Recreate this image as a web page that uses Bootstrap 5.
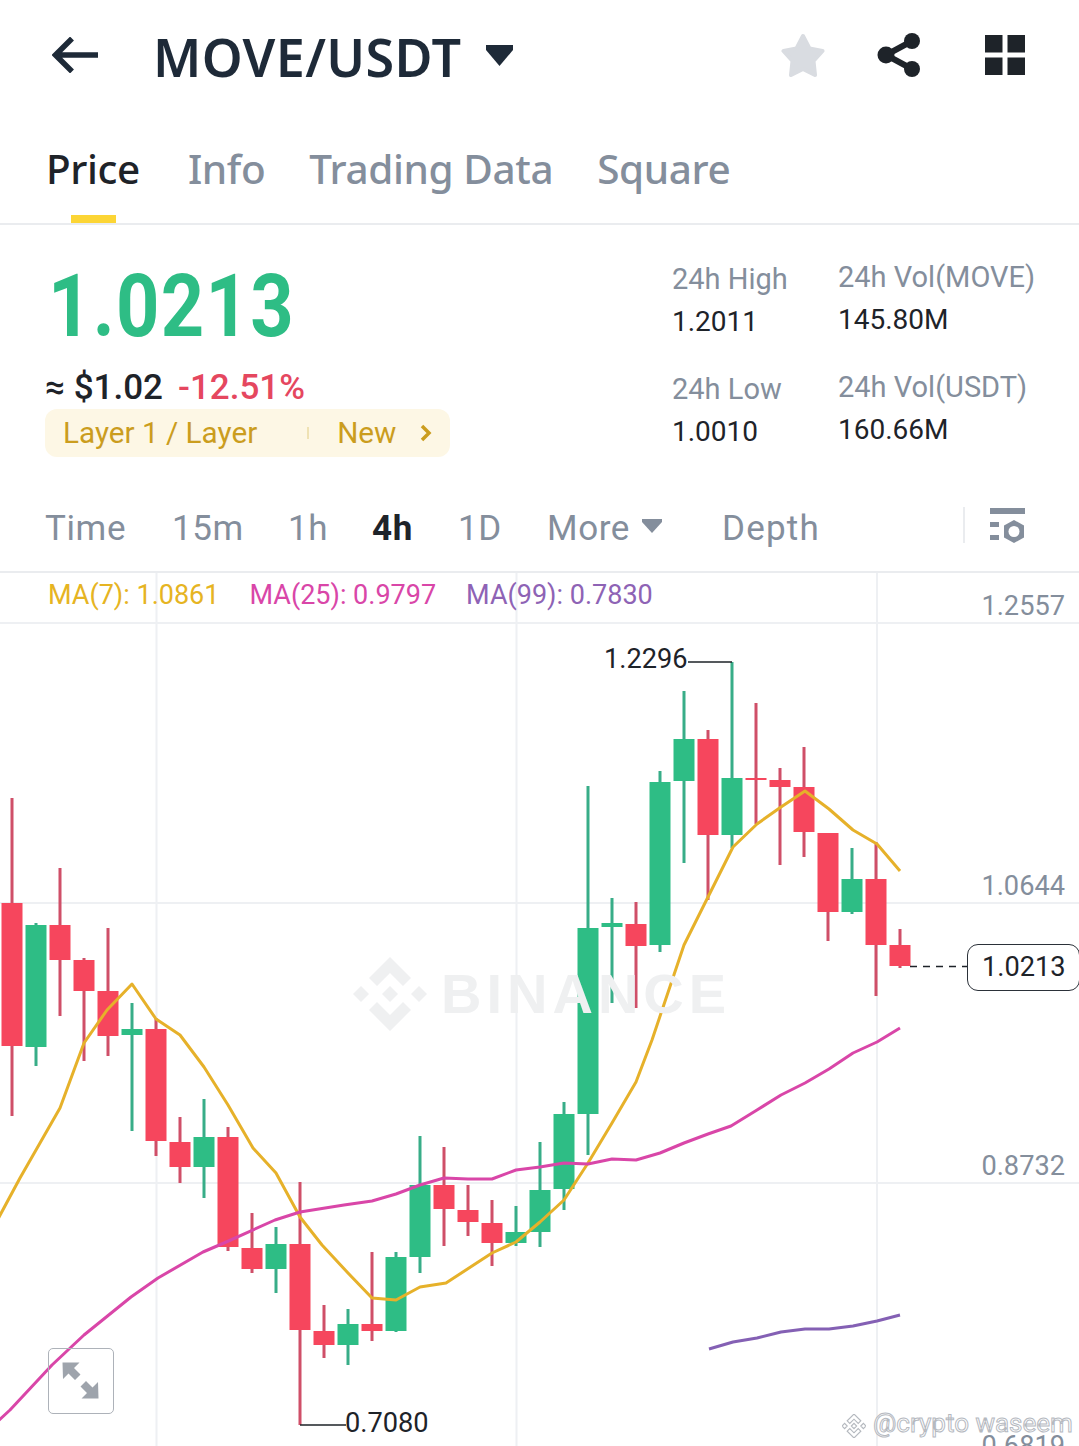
<!doctype html>
<html lang="en"><head><meta charset="utf-8">
<title>MOVE/USDT</title>
<link href="https://cdn.jsdelivr.net/npm/bootstrap@5.3.0/dist/css/bootstrap.min.css" rel="stylesheet">
<style>
html,body{height:1446px;overflow:hidden;background:#fff}
body{font-family:Roboto,"Liberation Sans",sans-serif;color:#1e2329;position:relative}
.topbar{height:112px;padding:0 54px 2px 52px}
.pair{font-family:"Noto Sans",Roboto,sans-serif;font-size:52px;font-weight:600;line-height:1;margin:3px 0 0 55px;letter-spacing:.4px;color:#1e2a38}
.paircaret{margin-left:25px}
.iconstar{margin-right:52px}
.iconshare{margin-right:64px}
.tabbar{height:113px;border-bottom:2px solid #eaecef;padding-left:46px;align-items:flex-start;padding-top:30px}
.tabitem{font-family:"Noto Sans",Roboto,sans-serif;font-size:40.5px;line-height:54px;color:#848e9c;font-weight:500;position:relative;height:81px;letter-spacing:-.4px;margin-right:44px}
.tabitem.on{color:#1e2329;margin-right:48px}
.tabitem.on::after{content:"";position:absolute;left:25px;bottom:0;width:45px;height:8px;background:#fcd535}
.stats{height:250px;padding:40px 0 0 45px;position:relative}
.bigprice{font-size:87px;font-weight:700;color:#2ebd85;line-height:82px;height:82px;margin-left:3px;transform:scaleX(.87);transform-origin:left center;letter-spacing:1.5px}
.subprice{font-size:35px;font-weight:500;line-height:40px;margin-top:21px}
.subprice .pct{color:#e5475f;margin-left:15px}
.tagpill{width:405px;height:48px;background:#fdf7e5;border-radius:12px;padding:0 18px;color:#cb9d1e;font-size:29.7px;line-height:48px;margin-top:1px}
.tagsep{width:2px;height:12px;background:#efe2b4;margin-left:50px;margin-right:28px}
.statgrid{position:absolute;left:672px;top:32px;display:grid;grid-template-columns:166px auto}
.statcell{height:110px;font-size:28px;line-height:42px}
.statlabel{color:#848e9c;font-size:29px;line-height:44px}
.statcell.rightcol{margin-top:-2px}
.intervals{height:98px;border-bottom:2px solid #eaecef;padding:12px 0 0 45px;position:relative;font-size:35px;color:#848e9c;letter-spacing:.6px;align-items:center}
.ivon{color:#1e2329;font-weight:700}
.ivdepth{margin-left:60px;letter-spacing:1.2px}
.ivcaret{margin:0 0 6px 12px}
.ivsep{position:absolute;left:963px;top:32px;width:2px;height:36px;background:#eaecef}
.ivgear{margin:0 53px 6px auto}
.chart{position:relative;height:873px;overflow:hidden}
.chart svg.plot{display:block;position:absolute;left:0;top:0}
.malegend{position:absolute;left:48px;top:4px;font-size:27px;line-height:36px;white-space:nowrap}
.ma7{color:#e6b422}.ma25{color:#d946a8;margin-left:30px}.ma99{color:#8e63b5;margin-left:30px}
.axislabel{position:absolute;right:14px;font-size:27.2px;line-height:32px;color:#848e9c}
.extreme{position:absolute;font-size:27.2px;line-height:32px;color:#1e2329}
.pricetag{position:absolute;left:967px;top:371px;width:113px;height:47px;border:1.5px solid #2b3139;border-radius:11px;background:#fff;font-size:27.2px;line-height:44px;padding-left:14px}
.expandbtn{position:absolute;left:48px;top:775px;width:66px;height:66px;border:1.5px solid #adb2b9;border-radius:5px}
.wmark{position:absolute;left:441px;top:391px;font-family:"Liberation Sans",sans-serif;font-weight:700;font-size:56px;line-height:60px;color:#eff0f1;letter-spacing:5px}
.wmlogo{position:absolute;left:353px;top:384px}
.credit{position:absolute;left:873px;top:832px;font-size:26px;line-height:36px;color:#fff;-webkit-text-stroke:1px #b5b9bf;white-space:nowrap}
.creditlogo{position:absolute;left:842px;top:841px}
</style></head>
<body>
<header class="topbar d-flex align-items-center">
  <svg width="46" height="36" viewBox="0 0 46 36" aria-hidden="true"><path d="M20 1.500 3.500 18 20 34.500M4 18h42" fill="none" stroke="#1e2a38" stroke-width="5.5"/></svg>
  <div class="pair">MOVE/USDT</div>
  <svg class="paircaret" width="27" height="21" viewBox="0 0 27 21" aria-hidden="true"><path d="M0 0H27V5L13.500 21 0 5z" fill="#1e2a38"/></svg>
  <svg class="iconstar ms-auto" width="44" height="45" viewBox="0 0 44 45" aria-hidden="true"><path d="M22 3 28.500 15.500 41.500 18 32.500 28 34 42 22 36 10 42 11.500 28 2.500 18 15.500 15.500z" fill="#d9dce1" stroke="#d9dce1" stroke-width="4" stroke-linejoin="round"/></svg>
  <svg class="iconshare" width="44" height="46" viewBox="0 0 44 46" aria-hidden="true"><path d="M35 9 9 23l26 14" fill="none" stroke="#1e2329" stroke-width="6"/><circle cx="35" cy="9" r="8" fill="#1e2329"/><circle cx="9" cy="23" r="8.500" fill="#1e2329"/><circle cx="35" cy="37" r="8" fill="#1e2329"/></svg>
  <svg width="40" height="40" viewBox="0 0 40 40" aria-hidden="true"><path d="M0 0h17.500v17.500H0zM22.500 0H40v17.500H22.500zM0 22.500h17.500V40H0zM22.500 22.500H40V40H22.500z" fill="#1e2329"/></svg>
</header>
<nav class="tabbar d-flex">
  <div class="tabitem on">Price</div><div class="tabitem">Info</div><div class="tabitem">Trading Data</div><div class="tabitem">Square</div>
</nav>
<section class="stats">
  <div class="bigprice">1.0213</div>
  <div class="subprice">≈ $1.02<span class="pct">-12.51%</span></div>
  <div class="tagpill d-flex align-items-center">
    <span>Layer 1 / Layer</span><span class="tagsep"></span><span>New</span>
    <svg class="ms-auto" width="12" height="18" viewBox="0 0 12 18" aria-hidden="true"><path d="M2 2l7 7-7 7" fill="none" stroke="#cb9d1e" stroke-width="3.500"/></svg>
  </div>
  <div class="statgrid">
    <div class="statcell"><div class="statlabel">24h High</div><div>1.2011</div></div>
    <div class="statcell rightcol"><div class="statlabel">24h Vol(MOVE)</div><div>145.80M</div></div>
    <div class="statcell"><div class="statlabel">24h Low</div><div>1.0010</div></div>
    <div class="statcell rightcol"><div class="statlabel">24h Vol(USDT)</div><div>160.66M</div></div>
  </div>
</section>
<div class="intervals d-flex">
  <span style="width:127px">Time</span><span style="width:116px">15m</span><span style="width:84px">1h</span><span class="ivon" style="width:86px">4h</span><span style="width:89px">1D</span>
  <span>More</span><svg class="ivcaret" width="20" height="14" viewBox="0 0 20 14" aria-hidden="true"><path d="M0 0H20V3L10 14 0 3z" fill="#848e9c"/></svg>
  <span class="ivdepth">Depth</span>
  <span class="ivsep"></span>
  <svg class="ivgear" width="36" height="36" viewBox="0 0 36 36" aria-hidden="true"><path d="M0 0h35v6H0zM0 14h9v5H0zM0 27h9v5H0z" fill="#848e9c"/><path d="M24 12 34 17.500v12L24 35 14 29.500v-12z" fill="#848e9c"/><circle cx="24" cy="23.500" r="5.500" fill="#fff"/></svg>
</div>
<main class="chart">
  <svg class="plot" width="1079" height="873" viewBox="0 573 1079 873" aria-hidden="true">
    <path d="M0 623H1079M0 903H1079M0 1183H1079M156.500 573V1446M516.500 573V1446M877 573V1446" stroke="#eef0f3" stroke-width="2" fill="none"/>
    <path d="M36 923V1066M132 1003V1131M204 1099V1198M276 1227V1293M348 1309V1365M396 1252V1332M420 1136V1273M516 1206V1246M540 1142V1247M564 1102V1210M588 786V1155M612 898V1003M660 771V952M684 691V863M732 662V848M852 848V914" stroke="#38ad88" stroke-width="3" fill="none"/>
    <path d="M12 798V1116M60 868V1016M84 958V1061M108 928V1056M156 1018V1156M180 1117V1183M228 1127V1251M252 1213V1273M300 1182V1425M324 1305V1358M372 1252V1341M444 1147V1246M468 1185V1236M492 1200V1266M636 902V1008M708 730V900M756 703V824M780 768V865M804 747V857M828 833V941M876 842V996M900 929V968" stroke="#cf4f68" stroke-width="3" fill="none"/>
    <path d="M25.500 925h21v122h-21zM121.500 1029h21v6h-21zM193.500 1137h21v30h-21zM265.500 1244h21v25h-21zM337.500 1324h21v21h-21zM385.500 1257h21v74h-21zM409.500 1185h21v72h-21zM505.500 1232h21v11h-21zM529.500 1190h21v42h-21zM553.500 1114h21v75h-21zM577.500 928h21v186h-21zM601.500 923h21v4h-21zM649.500 782h21v163h-21zM673.500 739h21v42h-21zM721.500 778h21v57h-21zM841.500 879h21v33h-21z" fill="#2ebd85"/>
    <path d="M1.500 903h21v143h-21zM49.500 925h21v35h-21zM73.500 960h21v31h-21zM97.500 991h21v45h-21zM145.500 1029h21v112h-21zM169.500 1142h21v25h-21zM217.500 1137h21v110h-21zM241.500 1248h21v21h-21zM289.500 1244h21v86h-21zM313.500 1331h21v14h-21zM361.500 1324h21v7h-21zM433.500 1185h21v24h-21zM457.500 1210h21v12h-21zM481.500 1223h21v20h-21zM625.500 924h21v22h-21zM697.500 739h21v96h-21zM745.500 778h21v2h-21zM769.500 780h21v7h-21zM793.500 787h21v45h-21zM817.500 833h21v79h-21zM865.500 879h21v66h-21zM889.500 945h21v21h-21z" fill="#f6465d"/>
    <path d="M-2 1219 20 1178 60 1108 84 1043 107 1010 132 984 156 1019 180 1035 204 1067 228 1105 253 1148 276 1173 300 1217 322 1245 348 1273 372 1298 396 1300 420 1287 446 1283 492 1253 516 1242 540 1222 564 1200 588 1163 612 1123 636 1082 652 1040 684 945 708 897 733 847 757 824 781 807 805 791 829 809 853 830 877 844 900 871" fill="none" stroke="#e6b12a" stroke-width="3" stroke-linejoin="round"/>
    <path d="M-2 1421 10 1410 52 1365 84 1335 131 1297 158 1278 203 1252 224 1243 275 1220 300 1212 344 1205 372 1201 396 1194 420 1185 444 1178 468 1179 492 1179 516 1170 540 1167 564 1163 588 1164 612 1159 636 1160 660 1153 684 1143 708 1134 731 1126 757 1110 781 1095 805 1083 829 1069 853 1053 877 1042 900 1028" fill="none" stroke="#d946a8" stroke-width="3" stroke-linejoin="round"/>
    <path d="M709 1349 733 1342 757 1338 781 1332 805 1329 829 1329 853 1326 877 1321 900 1315" fill="none" stroke="#8460b4" stroke-width="3" stroke-linejoin="round"/>
    <path d="M688 662H732M300 1425H346" stroke="#1e2329" stroke-width="1.500" fill="none"/>
    <path d="M910 966.500H967" stroke="#1e2329" stroke-width="1.500" stroke-dasharray="7 6" fill="none"/>
  </svg>
  <svg class="wmlogo" width="74" height="74" viewBox="0 0 74 74" aria-hidden="true"><path d="M37 0 58 21 50 29 37 16 24 29 16 21zM0 37 8 29 16 37 8 45zM29 37 37 29 45 37 37 45zM58 37 66 29 74 37 66 45zM16 53 24 45 37 58 50 45 58 53 37 74z" fill="#eff0f1"/></svg>
  <div class="wmark">BINANCE</div>
  <div class="malegend"><span class="ma7">MA(7): 1.0861</span><span class="ma25">MA(25): 0.9797</span><span class="ma99">MA(99): 0.7830</span></div>
  <div class="axislabel" style="top:17px">1.2557</div>
  <div class="axislabel" style="top:297px">1.0644</div>
  <div class="axislabel" style="top:577px">0.8732</div>
  <div class="axislabel" style="top:857px">0.6819</div>
  <div class="extreme" style="left:604px;top:70px">1.2296</div>
  <div class="extreme" style="left:345px;top:834px">0.7080</div>
  <div class="pricetag">1.0213</div>
  <div class="expandbtn"><svg class="d-block" width="63" height="63" viewBox="0 0 63 63" aria-hidden="true"><path d="M13.500 13.500h17l-5.500 5.500 6.500 6.500-5.500 5.500-6.500-6.500-5.500 5.500zM49.500 49.500h-17l5.500-5.500-6.500-6.500 5.500-5.500 6.500 6.500 5.500-5.500z" fill="#9ea4ac"/></svg></div>
  <svg class="creditlogo" width="24" height="24" viewBox="0 0 74 74" aria-hidden="true"><path d="M37 0 58 21 50 29 37 16 24 29 16 21zM0 37 8 29 16 37 8 45zM29 37 37 29 45 37 37 45zM58 37 66 29 74 37 66 45zM16 53 24 45 37 58 50 45 58 53 37 74z" fill="#fff" stroke="#b5b9bf" stroke-width="3.500"/></svg>
  <div class="credit">@crypto waseem</div>
</main>
<script src="https://cdn.jsdelivr.net/npm/bootstrap@5.3.0/dist/js/bootstrap.bundle.min.js"></script>
</body></html>
